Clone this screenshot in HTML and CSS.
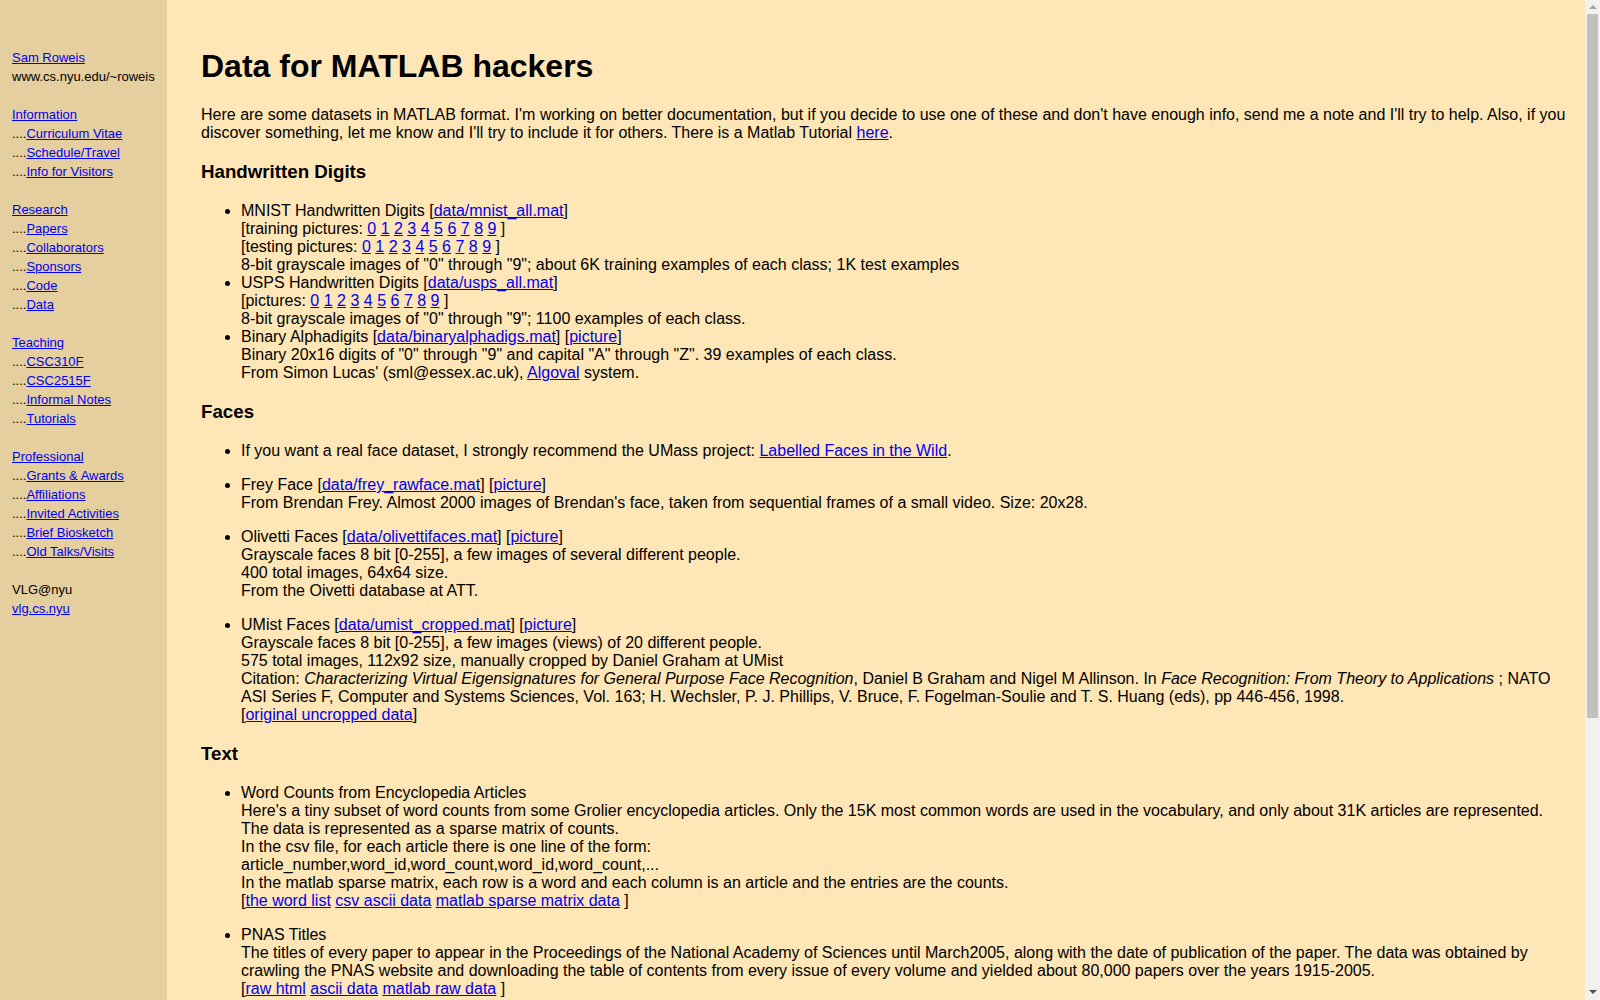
FILE: index.html
```html
<!DOCTYPE html>
<html lang="en">
<head>
  <meta charset="UTF-8" />
  <title>Data for MATLAB hackers</title>
  <link rel="stylesheet" href="styles.css">
</head>
<body>
  <div class="page">
    <div class="sidebar">
      <div class="nav-group">
        <a href="#">Sam Roweis</a><br>
        www.cs.nyu.edu/~roweis
      </div>
      <div class="nav-group">
        <a href="#">Information</a><br>
        ....<a href="#">Curriculum Vitae</a><br>
        ....<a href="#">Schedule/Travel</a><br>
        ....<a href="#">Info for Visitors</a>
      </div>
      <div class="nav-group">
        <a href="#">Research</a><br>
        ....<a href="#">Papers</a><br>
        ....<a href="#">Collaborators</a><br>
        ....<a href="#">Sponsors</a><br>
        ....<a href="#">Code</a><br>
        ....<a href="#">Data</a>
      </div>
      <div class="nav-group">
        <a href="#">Teaching</a><br>
        ....<a href="#">CSC310F</a><br>
        ....<a href="#">CSC2515F</a><br>
        ....<a href="#">Informal Notes</a><br>
        ....<a href="#">Tutorials</a>
      </div>
      <div class="nav-group">
        <a href="#">Professional</a><br>
        ....<a href="#">Grants &amp; Awards</a><br>
        ....<a href="#">Affiliations</a><br>
        ....<a href="#">Invited Activities</a><br>
        ....<a href="#">Brief Biosketch</a><br>
        ....<a href="#">Old Talks/Visits</a>
      </div>
      <div class="nav-group">
        VLG@nyu<br>
        <a href="#">vlg.cs.nyu</a>
      </div>
    </div>

    <div class="main">
      <h1>Data for MATLAB hackers</h1>
      <p>Here are some datasets in MATLAB format. I'm working on better documentation, but if you decide to use one of these and don't have enough info, send me a note and I'll try to help. Also, if you discover something, let me know and I'll try to include it for others. There is a Matlab Tutorial <a href="#">here</a>.</p>

      <h3>Handwritten Digits</h3>
      <ul>
        <li>MNIST Handwritten Digits [<a href="#">data/mnist_all.mat</a>]<br>
          [training pictures: <a href="#">0</a> <a href="#">1</a> <a href="#">2</a> <a href="#">3</a> <a href="#">4</a> <a href="#">5</a> <a href="#">6</a> <a href="#">7</a> <a href="#">8</a> <a href="#">9</a> ]<br>
          [testing pictures: <a href="#">0</a> <a href="#">1</a> <a href="#">2</a> <a href="#">3</a> <a href="#">4</a> <a href="#">5</a> <a href="#">6</a> <a href="#">7</a> <a href="#">8</a> <a href="#">9</a> ]<br>
          8-bit grayscale images of "0" through "9"; about 6K training examples of each class; 1K test examples</li>
        <li>USPS Handwritten Digits [<a href="#">data/usps_all.mat</a>]<br>
          [pictures: <a href="#">0</a> <a href="#">1</a> <a href="#">2</a> <a href="#">3</a> <a href="#">4</a> <a href="#">5</a> <a href="#">6</a> <a href="#">7</a> <a href="#">8</a> <a href="#">9</a> ]<br>
          8-bit grayscale images of "0" through "9"; 1100 examples of each class.</li>
        <li>Binary Alphadigits [<a href="#">data/binaryalphadigs.mat</a>] [<a href="#">picture</a>]<br>
          Binary 20x16 digits of "0" through "9" and capital "A" through "Z". 39 examples of each class.<br>
          From Simon Lucas' (sml@essex.ac.uk), <a href="#">Algoval</a> system.</li>
      </ul>

      <h3>Faces</h3>
      <ul class="spaced">
        <li>If you want a real face dataset, I strongly recommend the UMass project: <a href="#">Labelled Faces in the Wild</a>.</li>
        <li>Frey Face [<a href="#">data/frey_rawface.mat</a>] [<a href="#">picture</a>]<br>
          From Brendan Frey. Almost 2000 images of Brendan's face, taken from sequential frames of a small video. Size: 20x28.</li>
        <li>Olivetti Faces [<a href="#">data/olivettifaces.mat</a>] [<a href="#">picture</a>]<br>
          Grayscale faces 8 bit [0-255], a few images of several different people.<br>
          400 total images, 64x64 size.<br>
          From the Oivetti database at ATT.</li>
        <li>UMist Faces [<a href="#">data/umist_cropped.mat</a>] [<a href="#">picture</a>]<br>
          Grayscale faces 8 bit [0-255], a few images (views) of 20 different people.<br>
          575 total images, 112x92 size, manually cropped by Daniel Graham at UMist<br>
          Citation: <i>Characterizing Virtual Eigensignatures for General Purpose Face Recognition</i>, Daniel B Graham and Nigel M Allinson. In <i>Face Recognition: From Theory to Applications</i> ; NATO ASI Series F, Computer and Systems Sciences, Vol. 163; H. Wechsler, P. J. Phillips, V. Bruce, F. Fogelman-Soulie and T. S. Huang (eds), pp 446-456, 1998.<br>
          [<a href="#">original uncropped data</a>]</li>
      </ul>

      <h3>Text</h3>
      <ul class="spaced">
        <li>Word Counts from Encyclopedia Articles<br>
          Here's a tiny subset of word counts from some Grolier encyclopedia articles. Only the 15K most common words are used in the vocabulary, and only about 31K articles are represented.<br>
          The data is represented as a sparse matrix of counts.<br>
          In the csv file, for each article there is one line of the form:<br>
          article_number,word_id,word_count,word_id,word_count,...<br>
          In the matlab sparse matrix, each row is a word and each column is an article and the entries are the counts.<br>
          [<a href="#">the word list</a> <a href="#">csv ascii data</a> <a href="#">matlab sparse matrix data</a> ]</li>
        <li>PNAS Titles<br>
          The titles of every paper to appear in the Proceedings of the National Academy of Sciences until March2005, along with the date of publication of the paper. The data was obtained by crawling the PNAS website and downloading the table of contents from every issue of every volume and yielded about 80,000 papers over the years 1915-2005.<br>
          [<a href="#">raw html</a> <a href="#">ascii data</a> <a href="#">matlab raw data</a> ]</li>
        <li>NIPS Conference Papers Vols0-12<br>
          The text of all papers from the first thirteen volumes of the NIPS proceedings, as word counts per paper.<br>
          Also includes author and title information for each paper.<br>
          [<a href="#">matlab data</a> <a href="#">raw text</a> ]</li>
      </ul>

      <h3>Miscellaneous</h3>
      <ul class="spaced">
        <li>Spoken Digits<br>
          Isolated spoken digits from several speakers, as frames of cepstral coefficients.<br>
          [<a href="#">matlab data</a> ]</li>
        <li>Motion Capture<br>
          Joint angle sequences of a person walking, recorded with an optical motion capture system.<br>
          [<a href="#">matlab data</a> ]</li>
        <li>Robot Arm<br>
          [<a href="#">matlab data</a> ]</li>
      </ul>
      <p class="footnote">Last modified 2006.</p>
    </div>
  </div>

  <!-- window scrollbar as it shows in the screenshot -->
  <div class="scrollbar">
    <div class="arrow-up"></div>
    <div class="thumb"></div>
    <div class="arrow-down"></div>
  </div>
</body>
</html>
```

FILE: styles.css
```css
body {
  margin: 0;
  font-family: "Liberation Sans", Arial, sans-serif;
  font-size: 16px;
  color: #000;
  background: #ffe6b6;
}
a {
  color: #0000ee;
}
.page {
  display: flex;
  min-height: 100vh;
}
.sidebar {
  flex: 0 0 167px;
  box-sizing: border-box;
  padding: 48px 0 0 12px;
  background: #e5cf9e;
  font-size: 13px;
  line-height: 19px;
}
.nav-group {
  margin-bottom: 19px;
}
.main {
  flex: 1;
  min-width: 0;
  padding: 27px 30px 14px 34px;
}
.main h1 {
  font-size: 32px;
  margin: 21px 0;
}
.main h3 {
  font-size: 18.72px;
  margin: 19px 0;
}
.main ul {
  padding-left: 40px;
}
.spaced li {
  margin-bottom: 16px;
}
.footnote {
  color: #555;
}
.scrollbar {
  position: fixed;
  top: 0;
  right: 0;
  width: 15px;
  height: 100vh;
  background: #f1f1f1;
}
.thumb {
  position: absolute;
  top: 14px;
  left: 2px;
  right: 2px;
  height: 704px;
  background: #c1c1c1;
}
.arrow-up, .arrow-down {
  position: absolute;
  left: 4px;
  width: 0;
  height: 0;
  border-left: 4px solid transparent;
  border-right: 4px solid transparent;
}
.arrow-up {
  top: 5px;
  border-bottom: 4px solid #a3a3a3;
}
.arrow-down {
  bottom: 6px;
  border-top: 4px solid #505050;
}
```
